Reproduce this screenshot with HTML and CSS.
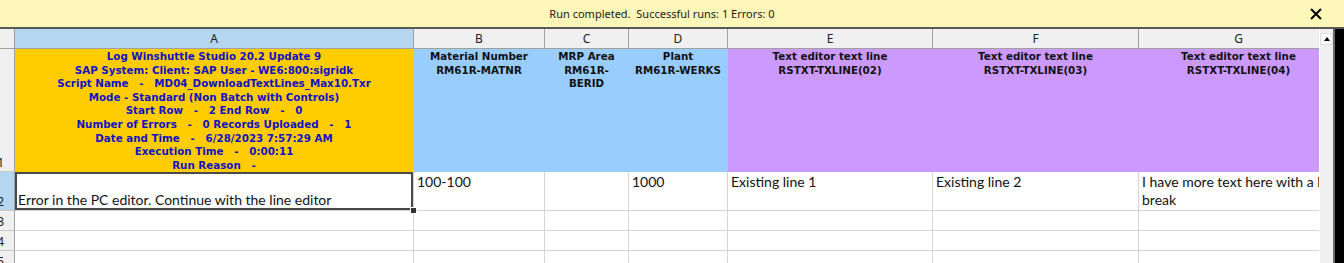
FILE: index.html
```html
<!DOCTYPE html>
<html lang="en">

<head>
    <meta charset="UTF-8">
    <meta name="viewport" content="width=device-width, initial-scale=1.0">
    <title>Winshuttle Run Log</title>
    <link rel="stylesheet" href="styles.css">
</head>

<body>
    <div class="notice">
        <span class="notice-text">Run completed.&nbsp; Successful runs: 1 Errors: 0</span>
        <button class="notice-close" title="Close">
            <svg width="12" height="12" viewBox="0 0 12 12">
                <path d="M1 1 L11 11 M11 1 L1 11" stroke="#000" stroke-width="2" fill="none" />
            </svg>
        </button>
    </div>

    <div class="sheet">
        <div class="grid">
            <!-- column headers -->
            <div class="corner"></div>
            <div class="col-head selected">A</div>
            <div class="col-head">B</div>
            <div class="col-head">C</div>
            <div class="col-head">D</div>
            <div class="col-head">E</div>
            <div class="col-head">F</div>
            <div class="col-head">G</div>

            <!-- row 1: log + field headers -->
            <div class="row-head"><span>1</span></div>
            <div class="cell log">
                Log Winshuttle Studio 20.2 Update 9<br>
                SAP System: Client: SAP User - WE6:800:sigridk<br>
                Script Name &nbsp; - &nbsp; MD04_DownloadTextLines_Max10.Txr<br>
                Mode - Standard (Non Batch with Controls)<br>
                Start Row &nbsp; - &nbsp; 2 End Row &nbsp; - &nbsp; 0<br>
                Number of Errors &nbsp; - &nbsp; 0 Records Uploaded &nbsp; - &nbsp; 1<br>
                Date and Time &nbsp; - &nbsp; 6/28/2023 7:57:29 AM<br>
                Execution Time &nbsp; - &nbsp; 0:00:11<br>
                Run Reason &nbsp; -
            </div>
            <div class="cell field blue">Material Number<br>RM61R-MATNR</div>
            <div class="cell field blue">MRP Area<br>RM61R-<br>BERID</div>
            <div class="cell field blue">Plant<br>RM61R-WERKS</div>
            <div class="cell field purple">Text editor text line<br>RSTXT-TXLINE(02)</div>
            <div class="cell field purple">Text editor text line<br>RSTXT-TXLINE(03)</div>
            <div class="cell field purple">Text editor text line<br>RSTXT-TXLINE(04)</div>

            <!-- row 2: data -->
            <div class="row-head selected"><span>2</span></div>
            <div class="cell data message active">Error in the PC editor. Continue with the line editor</div>
            <div class="cell data">100-100</div>
            <div class="cell data"></div>
            <div class="cell data">1000</div>
            <div class="cell data">Existing line 1</div>
            <div class="cell data">Existing line 2</div>
            <div class="cell data">I have more text here with a line<br>break</div>

            <div class="row-head"><span>3</span></div>
            <div class="cell"></div><div class="cell"></div><div class="cell"></div><div class="cell"></div>
            <div class="cell"></div><div class="cell"></div><div class="cell"></div>

            <div class="row-head"><span>4</span></div>
            <div class="cell"></div><div class="cell"></div><div class="cell"></div><div class="cell"></div>
            <div class="cell"></div><div class="cell"></div><div class="cell"></div>

            <div class="row-head"><span>5</span></div>
            <div class="cell"></div><div class="cell"></div><div class="cell"></div><div class="cell"></div>
            <div class="cell"></div><div class="cell"></div><div class="cell"></div>
        </div>

        <div class="vscroll">
            <div class="scroll-btn"><span class="arrow-up"></span></div>
        </div>
        <div class="edge"></div>
    </div>
</body>

</html>
```

FILE: styles.css
```css
body {
    margin: 0;
    padding: 0;
    background-color: #fff;
    color: #000;
    font-family: 'Noto Sans', sans-serif;
    overflow: hidden;
}

.notice {
    height: 27px;
    background-color: #fcf6b9;
    border-bottom: 2px solid #595959;
    display: flex;
    align-items: center;
    padding-left: 14px;
}

.notice-text {
    flex: 1;
    text-align: center;
    font-size: 11px;
    color: #1a1a1a;
}

.notice-close {
    width: 12px;
    height: 12px;
    padding: 0;
    margin: 0 22px 0 0;
    border: none;
    background: none;
    display: flex;
}

.sheet {
    display: flex;
    height: 234px;
}

.grid {
    width: 1319px;
    display: grid;
    grid-template-columns: 15px 399px 131px 84px 99px 205px 206px 200px;
    grid-template-rows: 20px 123px 39px 20px 20px 20px;
    overflow: hidden;
}

.corner,
.col-head,
.row-head,
.cell {
    box-sizing: border-box;
    overflow: hidden;
}

.corner {
    background-color: #f0f0f0;
    border-right: 1px solid #a0a0a0;
    border-bottom: 1px solid #a0a0a0;
}

.col-head {
    background-color: #f0f0f0;
    border-right: 1px solid #a0a0a0;
    border-bottom: 1px solid #a0a0a0;
    font-size: 12px;
    color: #222;
    display: flex;
    align-items: center;
    justify-content: center;
}

.col-head.selected {
    background-color: #b5d6f1;
}

.row-head {
    background-color: #f0f0f0;
    border-right: 1px solid #a0a0a0;
    border-bottom: 1px solid #c8c8c8;
    font-size: 12px;
    line-height: 16px;
    color: #222;
    display: flex;
    align-items: flex-end;
    justify-content: flex-end;
    padding-right: 10px;
}

.row-head.selected {
    background-color: #b5d6f1;
}

.cell {
    border-right: 1px solid #d4d4d4;
    border-bottom: 1px solid #d4d4d4;
    background-color: #fff;
}

.log {
    background-color: #ffcc00;
    border-color: #ffcc00;
    color: #1212c8;
    font-family: 'DejaVu Sans', sans-serif;
    font-weight: bold;
    font-size: 10.3px;
    line-height: 13.6px;
    padding-top: 1px;
    text-align: center;
    white-space: nowrap;
}

.field {
    font-family: 'DejaVu Sans', sans-serif;
    font-weight: bold;
    font-size: 10.3px;
    line-height: 13.6px;
    padding-top: 1px;
    color: #111;
    text-align: center;
    white-space: nowrap;
}

.blue {
    background-color: #99ccff;
    border-color: #99ccff;
}

.purple {
    background-color: #cc99ff;
    border-color: #cc99ff;
}

.data {
    font-family: Lato, sans-serif;
    font-size: 14px;
    line-height: 18px;
    padding: 1px 3px 0;
    white-space: nowrap;
    color: #111;
}

.message {
    display: flex;
    align-items: flex-end;
    padding: 0 3px 1px;
}

.active {
    position: relative;
    overflow: visible;
    z-index: 1;
}

.active::after {
    content: "";
    position: absolute;
    inset: 0;
    border: 2px solid #4a4a4a;
}

.active::before {
    content: "";
    position: absolute;
    right: -3px;
    bottom: -3px;
    width: 5px;
    height: 5px;
    background-color: #333;
    outline: 1px solid #fff;
    z-index: 2;
}

.vscroll {
    width: 13px;
    border-left: 1px solid #fff;
    background-color: #f0f0f0;
    padding-top: 4px;
}

.scroll-btn {
    height: 12px;
    box-sizing: border-box;
    border: 1px solid #e0e0e0;
    background-color: #fafafa;
    display: flex;
    align-items: center;
    justify-content: center;
}

.arrow-up {
    width: 0;
    height: 0;
    border-left: 3.5px solid transparent;
    border-right: 3.5px solid transparent;
    border-bottom: 4px solid #000;
}

.edge {
    width: 9px;
    border-left: 2px solid #6b6b6b;
    background-color: #000;
}
```
